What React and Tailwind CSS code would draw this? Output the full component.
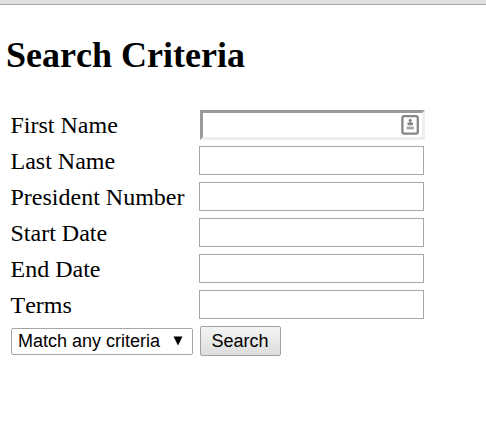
import { useState } from "react";

const fields = [
  { id: "lastName", label: "Last Name" },
  { id: "presidentNumber", label: "President Number" },
  { id: "startDate", label: "Start Date" },
  { id: "endDate", label: "End Date" },
  { id: "terms", label: "Terms" },
];

// Contact card badge inside the first input
function AutofillIcon() {
  return (
    <svg
      className="absolute right-[6px] top-[4px] h-[21px] w-[18px]"
      viewBox="0 0 18 21"
      fill="none"
    >
      <rect x="1.4" y="2.2" width="15.4" height="17.4" rx="1.8" stroke="#868686" strokeWidth="2.3" />
      <circle cx="9.2" cy="6.3" r="1.5" fill="#858585" />
      <path d="M8.4 7h1.6v1.6h1.9v2.6H6.5V8.6h1.9z" fill="#858585" />
      <path d="M5.6 12.6h7.2v2.8H5.6z" fill="#a6a6a6" />
    </svg>
  );
}

export default function App() {
  const [values, setValues] = useState({});

  const update = (e) => setValues({ ...values, [e.target.name]: e.target.value });

  return (
    <div className="h-[424px] w-[486px] overflow-hidden bg-white font-['Liberation_Serif',serif] text-black [font-kerning:none]">
      <div className="h-[5px] border-b border-[#a6a6a6] bg-[#e0e0e0]" />

      <h2 className="mt-[30px] pl-[6px] text-[36px] font-bold leading-[41px]">Search Criteria</h2>

      <form className="mt-[31px] pl-[10.5px] text-[24px]" onSubmit={(e) => e.preventDefault()}>
        <div className="flex h-9 items-center">
          <label htmlFor="firstName" className="w-[189.5px] leading-9">First Name</label>
          <div className="relative h-[30px] w-[225px]">
            <input
              id="firstName"
              name="firstName"
              value={values.firstName || ""}
              onChange={update}
              className="block h-[30px] w-[225px] border-[3px] border-b-[#eee] border-l-[#9a9a9a] border-r-[#eee] border-t-[#9a9a9a] bg-white pl-1 pr-7 font-['Liberation_Sans',sans-serif] text-[18px] outline-none"
            />
            <AutofillIcon />
          </div>
        </div>

        {fields.map((field) => (
          <div key={field.id} className="flex h-9 items-center">
            <label htmlFor={field.id} className="w-[188.5px] leading-9">{field.label}</label>
            <input
              id={field.id}
              name={field.id}
              value={values[field.id] || ""}
              onChange={update}
              className="mb-px h-[29px] w-[225px] border border-[#a6a6a6] bg-white px-1 font-['Liberation_Sans',sans-serif] text-[18px] outline-none"
            />
          </div>
        ))}

        <div className="flex h-9 items-center gap-[7px] font-['Liberation_Sans',sans-serif] text-[18px]">
          <button
            type="button"
            className="flex h-[27px] w-[182px] items-center justify-between rounded-[2px] border border-[#a6a6a6] bg-white pl-[6.5px] pr-[9px] leading-none"
          >
            Match any criteria
            <svg className="h-[10px] w-[10px]" viewBox="0 0 10 10">
              <path d="M.5.5h9L5 9.5z" fill="#000" />
            </svg>
          </button>
          <button
            type="submit"
            className="h-[30px] w-[81px] rounded-[2px] border border-[#a0a0a0] bg-linear-to-b from-[#f4f4f4] to-[#dddddd] leading-none"
          >
            Search
          </button>
        </div>
      </form>
    </div>
  );
}
